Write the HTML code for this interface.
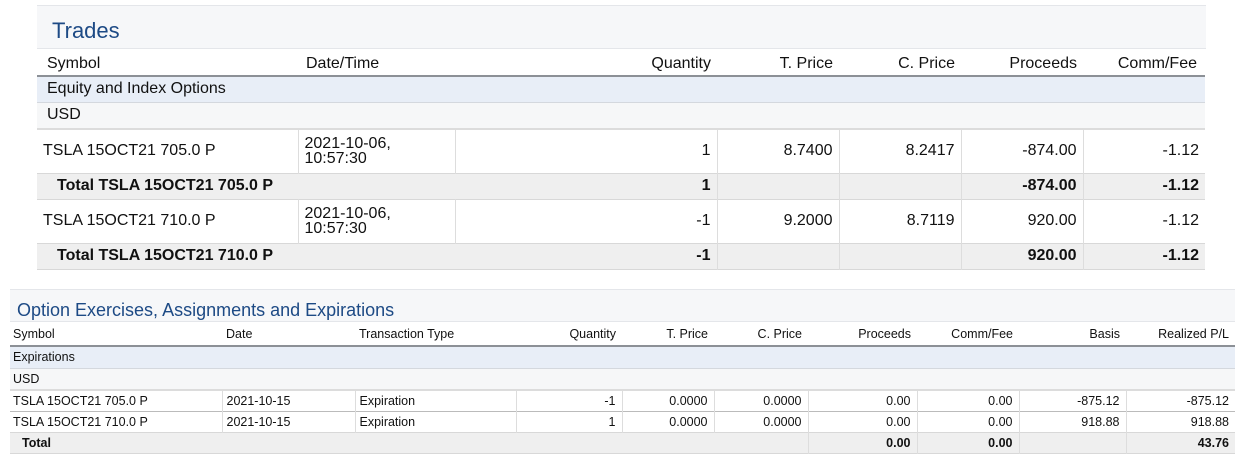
<!DOCTYPE html>
<html><head><meta charset="utf-8"><style>
body{margin:0;width:1243px;height:461px;background:#fff;font-family:"Liberation Sans",Arial,sans-serif;color:#111;position:relative;overflow:hidden}
.a{position:absolute;box-sizing:border-box}
table{border-collapse:collapse;table-layout:fixed;position:absolute}
td{padding:0 6px;white-space:nowrap;overflow:hidden;box-sizing:border-box}
.r{text-align:right}
.b{font-weight:bold}
</style></head><body>
<div class="a" style="left:37px;top:5px;width:1169px;height:44px;background:#f6f7f9;border-top:1px solid #e4e6ea;border-bottom:1px solid #e4e6ea"></div>
<div class="a" style="left:52px;top:18px;font-size:22px;color:#1d4a85">Trades</div>
<table style="left:37px;top:52px;width:1168px;font-size:16px">
<colgroup><col style="width:261px"><col style="width:157px"><col style="width:262px"><col style="width:122px"><col style="width:122px"><col style="width:122px"><col style="width:122px"></colgroup>
<tr style="height:24px;border-bottom:2px solid #8c9096"><td style="padding-left:10px">Symbol</td><td style="padding-left:8px">Date/Time</td><td class="r">Quantity</td><td class="r">T. Price</td><td class="r">C. Price</td><td class="r">Proceeds</td><td class="r" style="padding-right:8px">Comm/Fee</td></tr>
<tr style="height:26px;background:#e8eef7;border-bottom:1px solid #d4d8de"><td colspan="7" style="padding-left:10px">Equity and Index Options</td></tr>
<tr style="height:27px;background:#f6f7f8;border-bottom:2px solid #dcdcdc"><td colspan="7" style="padding-left:10px">USD</td></tr>
<tr style="height:44px;border-bottom:1px solid #d8d8d8"><td style="padding-left:6px;border-right:1px solid #ddd">TSLA 15OCT21 705.0 P</td><td style="border-right:1px solid #ddd;line-height:15px;white-space:normal">2021-10-06, 10:57:30</td><td class="r" style="border-right:1px solid #ddd">1</td><td class="r" style="border-right:1px solid #ddd">8.7400</td><td class="r" style="border-right:1px solid #ddd">8.2417</td><td class="r" style="border-right:1px solid #ddd">-874.00</td><td class="r">-1.12</td></tr>
<tr style="height:26px;background:#efefef;border-bottom:1px solid #d8d8d8" class="b"><td colspan="2" style="padding-left:20px">Total TSLA 15OCT21 705.0 P</td><td class="r" style="border-right:1px solid #ddd">1</td><td style="border-right:1px solid #ddd"></td><td style="border-right:1px solid #ddd"></td><td class="r" style="border-right:1px solid #ddd">-874.00</td><td class="r">-1.12</td></tr>
<tr style="height:44px;border-bottom:1px solid #d8d8d8"><td style="padding-left:6px;border-right:1px solid #ddd">TSLA 15OCT21 710.0 P</td><td style="border-right:1px solid #ddd;line-height:15px;white-space:normal">2021-10-06, 10:57:30</td><td class="r" style="border-right:1px solid #ddd">-1</td><td class="r" style="border-right:1px solid #ddd">9.2000</td><td class="r" style="border-right:1px solid #ddd">8.7119</td><td class="r" style="border-right:1px solid #ddd">920.00</td><td class="r">-1.12</td></tr>
<tr style="height:26px;background:#efefef;border-bottom:1px solid #d8d8d8" class="b"><td colspan="2" style="padding-left:20px">Total TSLA 15OCT21 710.0 P</td><td class="r" style="border-right:1px solid #ddd">-1</td><td style="border-right:1px solid #ddd"></td><td style="border-right:1px solid #ddd"></td><td class="r" style="border-right:1px solid #ddd">920.00</td><td class="r">-1.12</td></tr>
</table>

<div class="a" style="left:10px;top:289px;width:1225px;height:33px;background:#f6f7f9;border-top:1px solid #e4e6ea;border-bottom:1px solid #e4e6ea"></div>
<div class="a" style="left:17px;top:300px;font-size:18px;color:#1d4a85">Option Exercises, Assignments and Expirations</div>
<table style="left:10px;top:323px;width:1225px;font-size:12.5px">
<colgroup><col style="width:212px"><col style="width:133px"><col style="width:161px"><col style="width:106px"><col style="width:92px"><col style="width:94px"><col style="width:109px"><col style="width:102px"><col style="width:107px"><col style="width:109px"></colgroup>
<tr style="height:23px;border-bottom:2px solid #8c9096"><td style="padding-left:3px">Symbol</td><td style="padding-left:4px">Date</td><td style="padding-left:4px">Transaction Type</td><td class="r">Quantity</td><td class="r">T. Price</td><td class="r">C. Price</td><td class="r">Proceeds</td><td class="r">Comm/Fee</td><td class="r">Basis</td><td class="r">Realized P/L</td></tr>
<tr style="height:22px;background:#e8eef7;border-bottom:1px solid #d4d8de"><td colspan="10" style="padding-left:3px">Expirations</td></tr>
<tr style="height:22px;background:#f6f7f8;border-bottom:2px solid #dcdcdc"><td colspan="10" style="padding-left:3px">USD</td></tr>
<tr style="height:21px;border-bottom:1px solid #bbb"><td style="padding-left:3px;border-right:1px solid #ddd">TSLA 15OCT21 705.0 P</td><td style="padding-left:4px;border-right:1px solid #ddd">2021-10-15</td><td style="padding-left:4px;border-right:1px solid #ddd">Expiration</td><td class="r" style="border-right:1px solid #ddd">-1</td><td class="r" style="border-right:1px solid #ddd">0.0000</td><td class="r" style="border-right:1px solid #ddd">0.0000</td><td class="r" style="border-right:1px solid #ddd">0.00</td><td class="r" style="border-right:1px solid #ddd">0.00</td><td class="r" style="border-right:1px solid #ddd">-875.12</td><td class="r">-875.12</td></tr>
<tr style="height:21px;border-bottom:1px solid #d8d8d8"><td style="padding-left:3px;border-right:1px solid #ddd">TSLA 15OCT21 710.0 P</td><td style="padding-left:4px;border-right:1px solid #ddd">2021-10-15</td><td style="padding-left:4px;border-right:1px solid #ddd">Expiration</td><td class="r" style="border-right:1px solid #ddd">1</td><td class="r" style="border-right:1px solid #ddd">0.0000</td><td class="r" style="border-right:1px solid #ddd">0.0000</td><td class="r" style="border-right:1px solid #ddd">0.00</td><td class="r" style="border-right:1px solid #ddd">0.00</td><td class="r" style="border-right:1px solid #ddd">918.88</td><td class="r">918.88</td></tr>
<tr style="height:21px;background:#efefef;border-bottom:1px solid #d8d8d8" class="b"><td colspan="6" style="padding-left:12px;border-right:1px solid #ddd">Total</td><td class="r" style="border-right:1px solid #ddd">0.00</td><td class="r" style="border-right:1px solid #ddd">0.00</td><td style="border-right:1px solid #ddd"></td><td class="r">43.76</td></tr>
</table>
</body></html>
